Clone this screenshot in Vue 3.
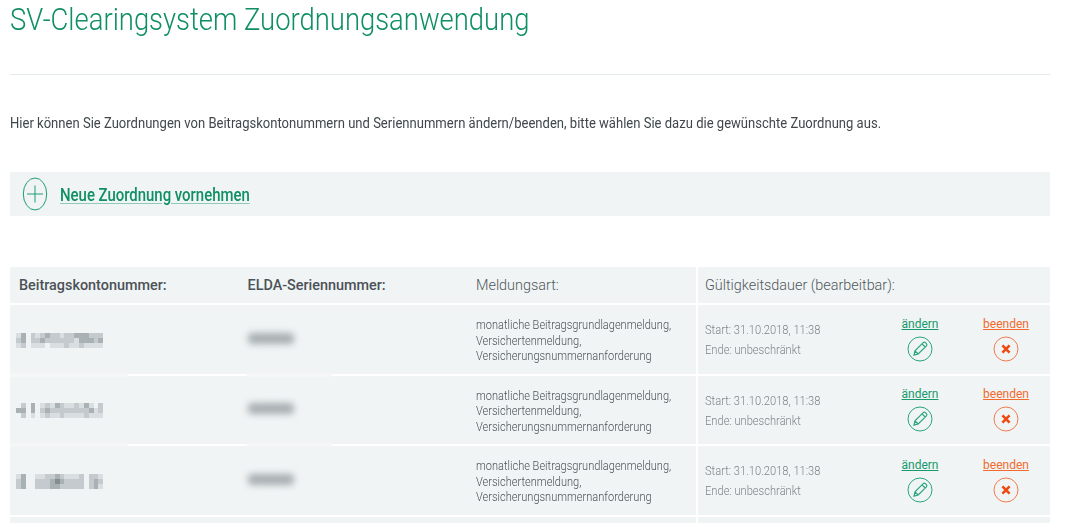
<script setup>
const rows = [
  [
    [1,3,0,2,1,2,3,2,2,1,2,2,3,3,3,2,2,2],
    [2,3,0,2,2,3,2,2,2,2,2,2,1,3,3,3,2,3],
    [1,2,0,1,1,1,0,1,1,1,2,1,1,2,1,1,1,1]
  ],
  [
    [0,2,0,3,0,1,2,1,3,2,1,1,2,1,3,1,0,2],
    [3,3,0,3,0,2,3,2,2,2,2,2,2,2,2,3,1,2],
    [0,2,0,1,0,1,2,1,1,2,1,1,1,1,2,1,1,1]
  ],
  [
    [1,3,0,0,1,1,2,2,3,2,1,1,1,2,0,2,2,1],
    [2,3,0,0,2,2,2,3,4,3,2,2,2,2,0,2,3,2],
    [2,3,0,0,2,2,2,3,3,2,2,2,2,2,0,2,3,1]
  ]
]
const shades = ['#f0f3f4', '#d9dee0', '#c4cacd', '#aab1b5', '#858d92']
const info = ['monatliche Beitragsgrundlagenmeldung,', 'Versichertenmeldung,', 'Versicherungsnummernanforderung']
</script>

<template>
  <main class="page">
    <h1 class="title"><span class="cond title-text">SV-Clearingsystem Zuordnungsanwendung</span></h1>
    <hr class="rule" />
    <p class="intro"><span class="cond">Hier können Sie Zuordnungen von Beitragskontonummern und Seriennummern ändern/beenden, bitte wählen Sie dazu die gewünschte Zuordnung aus.</span></p>
    <div class="new">
      <svg class="plus" width="26" height="34" viewBox="0 0 26 34" fill="none" stroke="#1f9d72">
        <ellipse cx="13" cy="17" rx="11.7" ry="16" stroke-width="1" />
        <path d="M13 8.5v17M5 17h16" stroke-width="1" />
      </svg>
      <a class="new-link" href="#"><span class="cond new-text">Neue Zuordnung vornehmen</span></a>
    </div>
    <section class="table">
      <div class="row head">
        <div class="cell strong">Beitragskontonummer:</div>
        <div class="cell strong">ELDA-Seriennummer:</div>
        <div class="cell light col3">Meldungsart:</div>
        <div class="cell light last">Gültigkeitsdauer (bearbeitbar):</div>
      </div>
      <div v-for="(r, i) in rows" :key="i" class="row body">
        <div class="cell">
          <div class="pix">
            <template v-for="(line, k) in r" :key="k">
              <i v-for="(v, j) in line" :key="j" :style="{ background: shades[v] }"></i>
            </template>
          </div>
          <span v-if="i < 2" class="patch patch-a"></span>
        </div>
        <div class="cell">
          <div class="blurred"></div>
          <span v-if="i < 2" class="patch patch-b"></span>
        </div>
        <div class="cell info col3"><span v-for="t in info" :key="t" class="cond small">{{ t }}</span></div>
        <div class="cell last validity">
          <div class="dates">
            <span class="cond small">Start: 31.10.2018, 11:38</span>
            <span class="cond small">Ende: unbeschränkt</span>
          </div>
          <div class="action green">
            <a href="#">ändern</a>
            <svg width="26" height="26" viewBox="0 0 26 26" fill="none" stroke="#2aa57c">
              <circle cx="13" cy="13" r="12" />
              <path d="M7 19.2l1-4.4 8.2-8.2a1.5 1.5 0 0 1 2.1 0l1.1 1.1a1.5 1.5 0 0 1 0 2.1L11.2 18zM8 14.8l3.2 3.2M15 7.8l3.2 3.2" stroke-width="1.2" />
            </svg>
          </div>
          <div class="action orange">
            <a href="#">beenden</a>
            <svg width="26" height="26" viewBox="0 0 26 26" fill="none">
              <circle cx="13" cy="13" r="12" stroke="#f47b4a" />
              <path d="M9.4 9.4l7.2 7.2M16.6 9.4l-7.2 7.2" stroke="#ef4a12" stroke-width="2.6" />
            </svg>
          </div>
        </div>
      </div>
      <div class="row stub">
        <div class="cell"></div><div class="cell"></div><div class="cell"></div><div class="cell last"></div>
      </div>
    </section>
  </main>
</template>

<style scoped>
.page {
  width: 1083px;
  height: 523px;
  overflow: hidden;
  box-sizing: border-box;
  padding: 0 33px 0 10px;
  font-family: Roboto, "Liberation Sans", sans-serif;
  color: #4a5257;
}
.cond {
  display: inline-block;
  transform: scaleX(0.87);
  transform-origin: left center;
  white-space: nowrap;
}
.title {
  margin: 0;
  height: 38px;
  font-size: 32px;
  line-height: 38px;
  font-weight: 300;
  color: #0f8f63;
}
.title-text { transform: scaleX(0.857); }
.rule {
  margin: 36px 0 0;
  border: 0;
  height: 1px;
  background: #e4ecea;
}
.intro {
  margin: 39px 0 0;
  font-size: 15px;
  line-height: 18px;
  color: #3f474b;
}
.new {
  margin-top: 40px;
  height: 44px;
  display: flex;
  align-items: center;
  padding-left: 12px;
  gap: 12px;
  background: #f0f4f4;
}
.new-link {
  font-size: 18px;
  color: #0f8f63;
  text-decoration: none;
}
.new-text {
  font-weight: 500;
  transform: scaleX(0.829);
  text-decoration: underline;
  text-decoration-color: #8fcbb3;
  text-underline-offset: 2px;
  margin-top: -2px;
}
.table {
  margin-top: 51px;
  display: flex;
  flex-direction: column;
  gap: 2px;
}
.row {
  display: grid;
  grid-template-columns: 228.5px 229px 228.5px 1fr;
}
.head { height: 36px; }
.body { height: 68.5px; }
.stub { height: 20px; }
.cell {
  position: relative;
  background: #f0f4f5;
  padding-left: 9px;
  display: flex;
  align-items: center;
  box-sizing: border-box;
}
.col3 { padding-left: 8.5px; }
.last { border-left: 2px solid #fff; padding-left: 7px; }
.strong { font-size: 14.4px; font-weight: 500; color: #4b5257; }
.light { font-size: 14.4px; font-weight: 300; color: #50585c; }
.pix {
  display: grid;
  grid-template-columns: repeat(18, 4.85px);
  grid-auto-rows: 5px;
  margin-left: -3px;
  margin-top: 2px;
  filter: blur(.5px);
}
.blurred {
  width: 46px;
  height: 11px;
  margin-top: -2px;
  background: #a6adb0;
  filter: blur(3.5px);
  border-radius: 4px;
}
.patch {
  position: absolute;
  bottom: -3px;
  height: 4px;
  background: #f5f7f7;
  z-index: 1;
}
.patch-a { left: 0; width: 118px; }
.patch-b { left: 8.5px; width: 85px; }
.info {
  flex-direction: column;
  align-items: flex-start;
  justify-content: center;
  padding-top: 2px;
  font-size: 12.7px;
  line-height: 15.5px;
  font-weight: 300;
  color: #4a5257;
}
.small { font-weight: 300; }
.dates {
  display: flex;
  flex-direction: column;
  padding-top: 2px;
  font-size: 12.8px;
  line-height: 20px;
  color: #7d8488;
  width: 174px;
}
.action {
  display: flex;
  flex-direction: column;
  align-items: center;
  gap: 5px;
  width: 82px;
  font-size: 12px;
  line-height: 14px;
}
.action a { color: inherit; text-decoration: underline; }
.green { color: #17996c; }
.orange { color: #f26a2c; margin-left: 4px; }
</style>

<style>
html, body { margin: 0; background: #fff; }
</style>
